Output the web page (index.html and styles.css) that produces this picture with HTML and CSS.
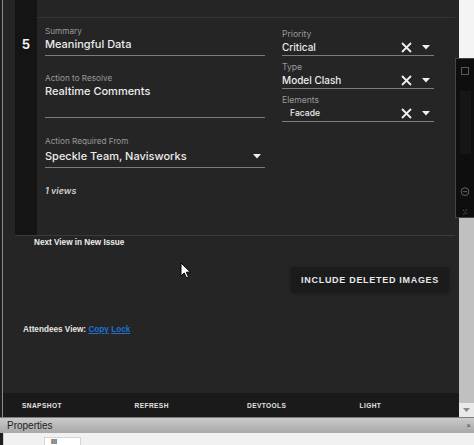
FILE: index.html
```html
<!DOCTYPE html>
<html>
<head>
<meta charset="utf-8">
<link rel="stylesheet" href="styles.css">
</head>
<body>
<div class="app">
  <div class="panel">
    <div class="main">
      <div class="card">
        <div class="strip"><span class="num">5</span></div>
        <div class="card-body">
          <div class="card-top"></div>
          <div class="fields">
            <div class="col-left">
              <div class="field f-summary">
                <div class="label">Summary</div>
                <div class="value">Meaningful Data</div>
              </div>
              <div class="field f-action">
                <div class="label">Action to Resolve</div>
                <div class="value area">Realtime Comments</div>
              </div>
              <div class="field f-req">
                <div class="label">Action Required From</div>
                <div class="value select">
                  <span class="grow">Speckle Team, Navisworks</span>
                  <svg class="caret" width="8" height="5" viewBox="0 0 8 5"><path d="M0 0H8L4 4.6Z" fill="#f0f0f0"/></svg>
                </div>
              </div>
              <div class="views">1 views</div>
            </div>
            <div class="col-right">
              <div class="rfield">
                <div class="label rlabel">Priority</div>
                <div class="value select rvalue">
                  <span class="grow">Critical</span>
                  <svg class="clear" width="11" height="11" viewBox="0 0 11 11"><path d="M1 1L10 10M10 1L1 10" stroke="#f0f0f0" stroke-width="1.8"/></svg>
                  <svg class="caret" width="8" height="5" viewBox="0 0 8 5"><path d="M0 0H8L4 4.6Z" fill="#f0f0f0"/></svg>
                </div>
              </div>
              <div class="rfield">
                <div class="label rlabel">Type</div>
                <div class="value select rvalue">
                  <span class="grow">Model Clash</span>
                  <svg class="clear" width="11" height="11" viewBox="0 0 11 11"><path d="M1 1L10 10M10 1L1 10" stroke="#f0f0f0" stroke-width="1.8"/></svg>
                  <svg class="caret" width="8" height="5" viewBox="0 0 8 5"><path d="M0 0H8L4 4.6Z" fill="#f0f0f0"/></svg>
                </div>
              </div>
              <div class="rfield">
                <div class="label rlabel">Elements</div>
                <div class="value select rvalue">
                  <span class="grow chip">Facade</span>
                  <svg class="clear" width="11" height="11" viewBox="0 0 11 11"><path d="M1 1L10 10M10 1L1 10" stroke="#f0f0f0" stroke-width="1.8"/></svg>
                  <svg class="caret" width="8" height="5" viewBox="0 0 8 5"><path d="M0 0H8L4 4.6Z" fill="#f0f0f0"/></svg>
                </div>
              </div>
            </div>
          </div>
        </div>
      </div>
      <div class="next">Next View in New Issue</div>
      <div class="actions"><button class="btn">INCLUDE DELETED IMAGES</button></div>
      <div class="attendees">Attendees View: <a class="link">Copy</a> <a class="link">Lock</a></div>
      <div class="bottombar">
        <span class="bb">SNAPSHOT</span>
        <span class="bb">REFRESH</span>
        <span class="bb">DEVTOOLS</span>
        <span class="bb">LIGHT</span>
      </div>
    </div>
    <div class="scroll">
      <div class="scroll-top"></div>
      <div class="scroll-track">
        <div class="scroll-down"><svg width="7" height="4" viewBox="0 0 7 4"><path d="M0 0H7L3.5 4Z" fill="#8a8a8a"/></svg></div>
      </div>
    </div>
  </div>
  <div class="props"><span>Properties</span><span class="close">×</span></div>
  <div class="props-body"><div class="tab"><span class="tab-glyph">III</span></div></div>

  <div class="widget">
    <div class="w-square"></div>
    <div class="w-track"></div>
    <svg class="w-circle" width="10" height="10" viewBox="0 0 10 10"><circle cx="5" cy="5" r="4.2" fill="none" stroke="#6a6a6a" stroke-width="1"/><path d="M2.5 5H7.5" stroke="#6a6a6a" stroke-width="1"/></svg>
    <span class="w-text">⁒</span>
  </div>

  <svg class="cursor" width="12" height="17" viewBox="0 0 12 17"><path d="M1 1V14L4.2 11L6.5 16L8.5 15.1L6.3 10.2H10.5Z" fill="#ffffff" stroke="#000" stroke-width="1"/></svg>
</div>
</body>
</html>
```

FILE: styles.css
```css
* { box-sizing: border-box; }
body { margin: 0; background: #1e1e1e; }
.app {
  position: relative;
  width: 474px;
  height: 445px;
  display: flex;
  flex-direction: column;
  overflow: hidden;
  font-family: Inter, "Liberation Sans", sans-serif;
  background: #1e1e1e;
}
.panel { display: flex; height: 417px; flex: none; }
.main {
  width: 457px;
  margin-left: 2px;
  border-left: 1px solid #8c8c8c;
  background: #252525;
  display: flex;
  flex-direction: column;
}
.card {
  margin-left: 12px;
  margin-right: 4px;
  height: 236px;
  flex: none;
  border-bottom: 1px solid #3a3a3a;
  display: flex;
}
.strip {
  width: 22px;
  background: #141414;
  display: flex;
  justify-content: center;
}
.num {
  margin-top: 36px;
  font-size: 13px;
  line-height: 16px;
  font-weight: 700;
  color: #f2f2f2;
}
.card-body { flex: 1; }
.card-top { height: 18px; border-bottom: 1px solid #343434; }
.fields { display: flex; gap: 17px; padding-left: 8px; }
.col-left { width: 220px; padding-top: 8px; }
.col-right { width: 152px; padding-top: 11px; }
.label { font-size: 8.2px; line-height: 10px; color: #9a9a9a; }
.rlabel { font-size: 8.6px; }
.value {
  font-size: 11px;
  line-height: 16px;
  font-weight: 500;
  color: #ececec;
  border-bottom: 1px solid #7c7c7c;
}
.rvalue { font-size: 10px; }
.f-summary .value { padding-bottom: 3px; }
.f-action { margin-top: 17px; }
.value.area { height: 35px; }
.f-req { margin-top: 18px; }
.f-req .value { padding: 2px 0 3px; }
.select { display: flex; align-items: center; }
.grow { flex: 1; white-space: nowrap; }
.caret { margin-right: 4px; flex: none; }
.clear { margin-right: 10px; flex: none; }
.chip { font-size: 8.6px; padding-left: 8px; }
.rfield + .rfield { margin-top: 6px; }
.views {
  margin-top: 17px;
  font-size: 9px;
  line-height: 12px;
  font-style: italic;
  font-weight: 600;
  color: #d0d0d0;
}
.next {
  margin: 1px 0 0 31px;
  font-family: "Liberation Sans", sans-serif;
  font-size: 8.2px;
  line-height: 12px;
  font-weight: 700;
  color: #eeeeee;
}
.actions {
  display: flex;
  justify-content: flex-end;
  margin-top: 18px;
  padding-right: 10px;
}
.btn {
  height: 25px;
  padding: 0 10px;
  border: none;
  background: #1b1b1b;
  color: #e8e8e8;
  font-family: "Liberation Sans", sans-serif;
  font-size: 9px;
  font-weight: 700;
  letter-spacing: 0.7px;
  box-shadow: 0 1px 3px rgba(0,0,0,0.4);
}
.attendees {
  margin-top: 32px;
  padding-left: 20px;
  font-family: "Liberation Sans", sans-serif;
  font-size: 8.2px;
  line-height: 12px;
  font-weight: 700;
  color: #e6e6e6;
}
.link { color: #1f6fd0; text-decoration: underline; font-weight: 700; }
.bottombar {
  margin-top: auto;
  height: 24px;
  flex: none;
  background: #1a1a1a;
  display: grid;
  grid-template-columns: repeat(4, 112.5px);
  padding-left: 19px;
  align-items: center;
}
.bb {
  font-family: "Liberation Sans", sans-serif;
  font-size: 6.6px;
  font-weight: 700;
  letter-spacing: 0.4px;
  color: #e2e2e2;
}
.scroll { width: 15px; display: flex; flex-direction: column; }
.scroll-top { height: 58px; background: #f4f4f4; }
.scroll-track {
  flex: 1;
  background: #c0c0c0;
  display: flex;
  flex-direction: column;
  justify-content: flex-end;
}
.scroll-down {
  height: 14px;
  background: #e9e9e9;
  display: flex;
  align-items: center;
  justify-content: center;
}
.props {
  height: 16px;
  flex: none;
  border-top: 1px solid #7e7e7e;
  background: linear-gradient(#cacaca, #a8a8a8);
  font-family: "Liberation Sans", sans-serif;
  font-size: 10px;
  color: #222;
  padding: 0 3px 0 7px;
  display: flex;
  align-items: center;
  justify-content: space-between;
}
.close { font-size: 8px; color: #444; }
.props-body {
  flex: 1;
  background: #f1f1f1;
  border-left: 1px solid #d0d0d0;
  margin-left: 3px;
  padding: 4px 0 0 40px;
}
.tab {
  width: 37px;
  height: 8px;
  background: #ffffff;
  border: 1px solid #d4d4d4;
  border-bottom: none;
  padding-left: 6px;
  font-family: "Liberation Sans", sans-serif;
  font-size: 7px;
  line-height: 7px;
  font-weight: 700;
  color: #333;
}
.tab-glyph { color: #333; }
.widget {
  position: absolute;
  left: 455px;
  top: 58px;
  width: 19px;
  height: 160px;
  background: #0e0e0e;
  border: 1px solid #444;
  border-right: none;
  display: flex;
  flex-direction: column;
  align-items: center;
}
.w-square {
  margin-top: 8px;
  width: 8px;
  height: 8px;
  border: 1px solid #5a5a5a;
}
.w-track {
  margin-top: 16px;
  width: 11px;
  height: 68px;
  background: #161616;
}
.w-circle { margin-top: 33px; }
.w-text { margin-top: 12px; font-size: 7px; color: #666; }
.cursor { position: absolute; left: 180px; top: 262px; }
```
